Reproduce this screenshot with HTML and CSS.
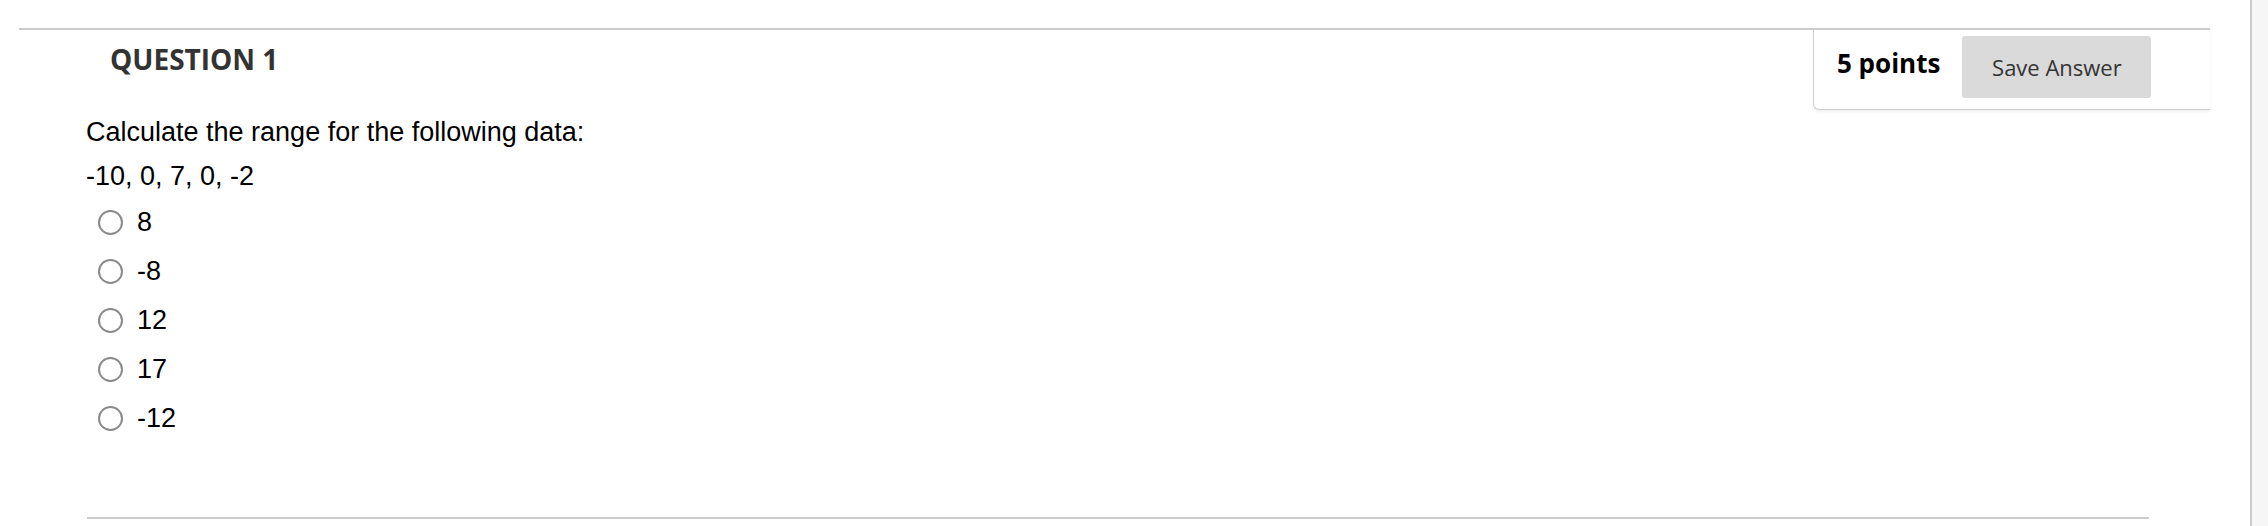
FILE: index.html
```html
<!DOCTYPE html>
<html lang="en">
<head>
<meta charset="utf-8">
<title>Question 1</title>
<link rel="stylesheet" href="styles.css">
</head>
<body>
<div class="page">
  <main class="main">
    <section class="question">
      <div class="qhead">
        <h2 class="qtitle">QUESTION 1</h2>
        <div class="points-box">
          <span class="points">5 points</span>
          <button class="save-btn" type="button">Save Answer</button>
        </div>
      </div>
      <div class="qbody">
        <p class="qtext">Calculate the range for the following data:</p>
        <p class="qtext">-10, 0, 7, 0, -2</p>
        <ul class="options">
          <li class="option"><span class="radio"></span><span class="opt-label">8</span></li>
          <li class="option"><span class="radio"></span><span class="opt-label">-8</span></li>
          <li class="option"><span class="radio"></span><span class="opt-label">12</span></li>
          <li class="option"><span class="radio"></span><span class="opt-label">17</span></li>
          <li class="option"><span class="radio"></span><span class="opt-label">-12</span></li>
        </ul>
      </div>
    </section>
    <hr class="separator">
  </main>
  <aside class="side"></aside>
</div>
</body>
</html>
```
FILE: styles.css
```css
html, body {
  margin: 0;
  padding: 0;
  background: #fff;
}
.page {
  display: flex;
  width: 2268px;
  height: 526px;
  overflow: hidden;
}
.main {
  width: 2250px;
  padding: 28px 0 0 19px;
  box-sizing: border-box;
  flex: none;
}
.side {
  flex: 1;
  background: #f6f6f6;
  border-left: 2px solid #cbcbcb;
}
.question {
  margin-right: 40px;
  border-top: 2px solid #cccccc;
}
.qhead {
  display: flex;
  justify-content: space-between;
  align-items: flex-start;
  height: 80px;
}
.qtitle {
  margin: 10px 0 0 91px;
  font-family: "Open Sans", sans-serif;
  font-weight: 700;
  font-size: 28px;
  line-height: normal;
  color: #333333;
}
.points-box {
  display: flex;
  align-items: flex-start;
  box-sizing: border-box;
  width: 397px;
  height: 80px;
  padding: 6px 0 0 23px;
  border-left: 1px solid #cfcfcf;
  border-bottom: 1px solid #cfcfcf;
  border-bottom-left-radius: 6px;
  box-shadow: 0 2px 3px rgba(0, 0, 0, 0.06);
}
.points {
  margin-top: 9px;
  font-family: "Open Sans", sans-serif;
  font-weight: 700;
  font-size: 26px;
  line-height: normal;
  color: #000;
}
.save-btn {
  margin-left: 22px;
  width: 189px;
  height: 62px;
  padding: 0;
  border: none;
  border-radius: 3px;
  background: #dadada;
  font-family: "Open Sans", sans-serif;
  font-size: 22px;
  color: #333;
}
.qbody {
  padding-left: 67px;
  font-family: "Liberation Sans", Arial, sans-serif;
  font-size: 27px;
  color: #000;
}
.qtext {
  margin: 0;
  line-height: 44px;
}
.options {
  list-style: none;
  margin: 0;
  padding: 0 0 0 12px;
}
.option {
  display: flex;
  align-items: center;
  height: 49px;
  line-height: 49px;
}
.radio {
  width: 25px;
  height: 25px;
  box-sizing: border-box;
  border: 2px solid #8a8a8a;
  border-radius: 50%;
  margin-right: 14px;
  flex: none;
}
.separator {
  margin: 74px 0 0 68px;
  width: 2062px;
  height: 2px;
  border: none;
  background: #cccccc;
}
```
